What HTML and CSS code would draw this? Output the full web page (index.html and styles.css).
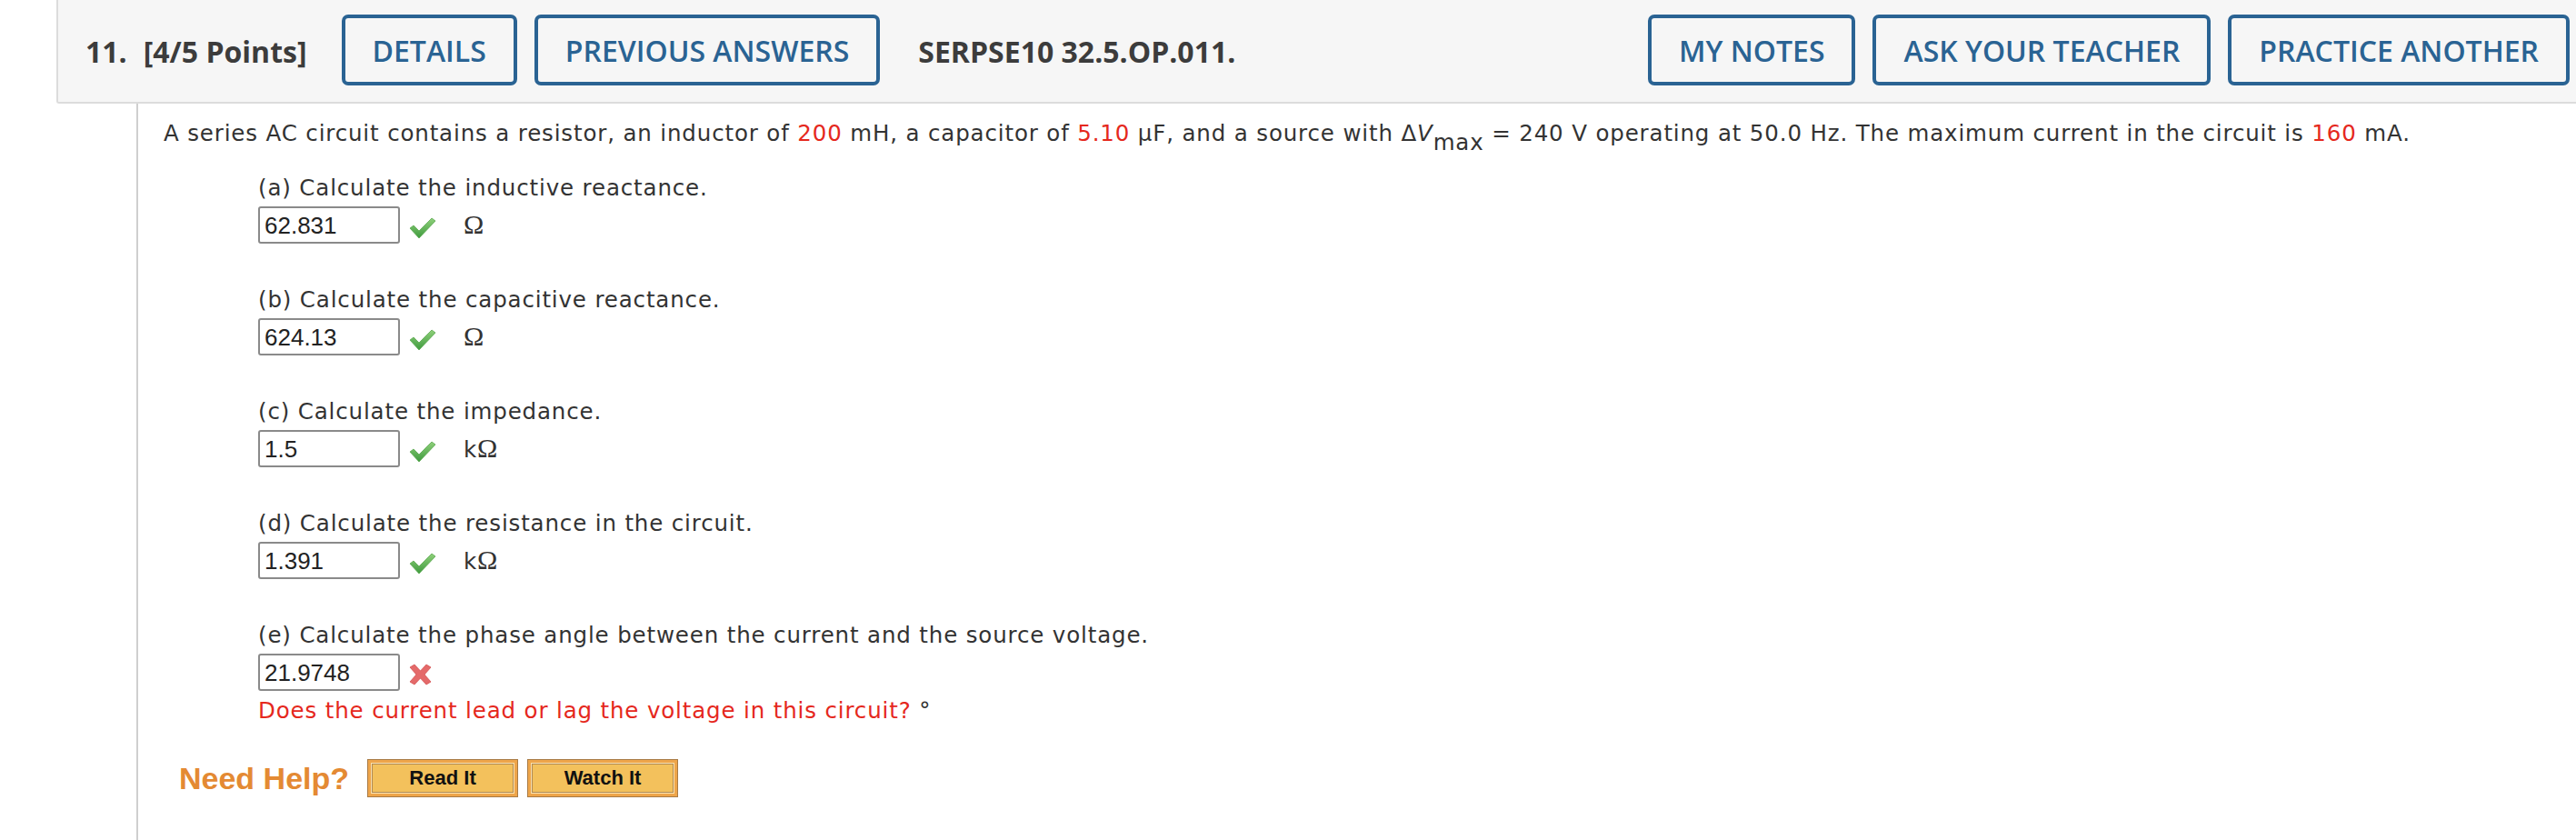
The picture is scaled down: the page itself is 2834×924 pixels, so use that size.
FILE: index.html
```html
<!DOCTYPE html>
<html>
<head>
<meta charset="utf-8">
<link rel="stylesheet" href="styles.css">
</head>
<body>
<div class="page">
  <div class="qhead">
    <span class="qnum">11.</span>
    <span class="qpts">[4/5 Points]</span>
    <button class="hbtn btn-details">DETAILS</button>
    <button class="hbtn">PREVIOUS ANSWERS</button>
    <span class="qcode">SERPSE10 32.5.OP.011.</span>
    <div class="hright">
      <button class="hbtn">MY NOTES</button>
      <button class="hbtn">ASK YOUR TEACHER</button>
      <button class="hbtn">PRACTICE ANOTHER</button>
    </div>
  </div>
  <div class="qbody">
    <p class="stem">A series AC circuit contains a resistor, an inductor of <span class="red">200</span> mH, a capacitor of <span class="red">5.10</span> μF, and a source with Δ<i>V</i><span class="sub">max</span> = 240 V operating at 50.0 Hz. The maximum current in the circuit is <span class="red">160</span> mA.</p>

    <div class="part">
      <div class="plabel">(a) Calculate the inductive reactance.</div>
      <div class="prow">
        <span class="ans">62.831</span>
        <svg class="ok" viewBox="0 0 30 25" width="30" height="25"><defs><linearGradient id="g1" x1="0" y1="0" x2="0" y2="1"><stop offset="0" stop-color="#8fd07a"/><stop offset="1" stop-color="#3e9a3e"/></linearGradient></defs><path d="M1 13 L5 10 L11 16 L25 2 L29 5 L11 24 Z" fill="url(#g1)" stroke="#5aa84f" stroke-width="0.8"/></svg>
        <span class="unit"><span class="ohm">Ω</span></span>
      </div>
    </div>

    <div class="part">
      <div class="plabel">(b) Calculate the capacitive reactance.</div>
      <div class="prow">
        <span class="ans">624.13</span>
        <svg class="ok" viewBox="0 0 30 25" width="30" height="25"><path d="M1 13 L5 10 L11 16 L25 2 L29 5 L11 24 Z" fill="url(#g1)" stroke="#5aa84f" stroke-width="0.8"/></svg>
        <span class="unit"><span class="ohm">Ω</span></span>
      </div>
    </div>

    <div class="part">
      <div class="plabel">(c) Calculate the impedance.</div>
      <div class="prow">
        <span class="ans">1.5</span>
        <svg class="ok" viewBox="0 0 30 25" width="30" height="25"><path d="M1 13 L5 10 L11 16 L25 2 L29 5 L11 24 Z" fill="url(#g1)" stroke="#5aa84f" stroke-width="0.8"/></svg>
        <span class="unit">k<span class="ohm">Ω</span></span>
      </div>
    </div>

    <div class="part">
      <div class="plabel">(d) Calculate the resistance in the circuit.</div>
      <div class="prow">
        <span class="ans">1.391</span>
        <svg class="ok" viewBox="0 0 30 25" width="30" height="25"><path d="M1 13 L5 10 L11 16 L25 2 L29 5 L11 24 Z" fill="url(#g1)" stroke="#5aa84f" stroke-width="0.8"/></svg>
        <span class="unit">k<span class="ohm">Ω</span></span>
      </div>
    </div>

    <div class="part part-last">
      <div class="plabel">(e) Calculate the phase angle between the current and the source voltage.</div>
      <div class="prow">
        <span class="ans">21.9748</span>
        <svg class="bad" viewBox="0 0 27 24" width="27" height="24"><path d="M2 4 L7 1 L13.5 8 L20 1 L25 4 L18 12 L25 20 L20 23 L13.5 16 L7 23 L2 20 L9 12 Z" fill="#e46a6a" stroke="#d55050" stroke-width="0.8"/></svg>
      </div>
      <div class="feedback">Does the current lead or lag the voltage in this circuit? <span class="deg">°</span></div>
    </div>

    <div class="help">
      <span class="help-label">Need Help?</span>
      <button class="hlp">Read It</button>
      <button class="hlp">Watch It</button>
    </div>
  </div>
</div>
</body>
</html>
```

FILE: styles.css
```css
html, body {
  margin: 0;
  padding: 0;
  background: #ffffff;
  overflow: hidden;
}
.page {
  width: 2834px;
  height: 924px;
  display: flex;
  flex-direction: column;
}
.qhead {
  flex-shrink: 0;
  margin-left: 62px;
  height: 112px;
  background: #f6f6f6;
  border-left: 2px solid #dcdcdc;
  border-bottom: 2px solid #dcdcdc;
  border-bottom-left-radius: 3px;
  display: flex;
  align-items: center;
  padding: 0 7px 0 30px;
  font-family: "Open Sans", sans-serif;
  color: #3c3c3c;
}
.qnum, .qpts, .qcode {
  font-weight: 700;
  font-size: 32px;
  white-space: nowrap;
}
.qpts {
  margin-left: 18px;
  margin-right: 38px;
}
.qcode {
  margin-left: 42px;
}
.hbtn {
  box-sizing: border-box;
  font-family: "Open Sans", sans-serif;
  font-weight: 600;
  font-size: 32px;
  color: #2a6393;
  background: #f6f6f6;
  border: 4px solid #2a6393;
  border-radius: 7px;
  height: 78px;
  padding: 0 30px;
  margin-top: -2px;
  white-space: nowrap;
}
.btn-details { margin-right: 19px; }
.hright {
  margin-left: auto;
  display: flex;
  gap: 19px;
}
.qbody {
  flex: 1;
  margin-left: 150px;
  border-left: 2px solid #cfcfcf;
  padding-left: 28px;
  font-family: "DejaVu Sans", Verdana, sans-serif;
  font-size: 24.5px;
  letter-spacing: 0.85px;
  color: #333333;
}
.stem {
  margin: 17px 0 0 0;
  line-height: 32px;
  white-space: nowrap;
}
.red { color: #e5281d; }
.sub {
  position: relative;
  top: 10px;
}
.part {
  margin-left: 104px;
  margin-top: 28px;
  display: flex;
  flex-direction: column;
}
.part + .part { margin-top: 46px; }
.plabel {
  line-height: 32px;
  white-space: nowrap;
}
.prow {
  display: flex;
  align-items: center;
  margin-top: 4px;
  height: 41px;
}
.ans {
  box-sizing: border-box;
  width: 156px;
  height: 41px;
  border: 2px solid #8a8a8a;
  border-radius: 3px;
  font-family: "Liberation Sans", Arial, sans-serif;
  font-size: 26px;
  letter-spacing: 0;
  color: #222;
  padding: 5px 0 0 5px;
  line-height: 28px;
}
.ok {
  margin-left: 10px;
  margin-top: 6px;
}
.bad {
  margin-left: 9px;
  margin-top: 4px;
}
.unit {
  margin-left: 30px;
  line-height: 32px;
}
.ohm {
  font-family: "Liberation Serif", "Times New Roman", serif;
  font-size: 30px;
  letter-spacing: 0;
}
.feedback {
  color: #e5281d;
  line-height: 32px;
  margin-top: 6px;
  white-space: nowrap;
}
.deg { color: #333; }
.help {
  display: flex;
  align-items: center;
  margin-left: 17px;
  margin-top: 37px;
}
.help-label {
  font-family: "Liberation Sans", Arial, sans-serif;
  font-weight: 700;
  font-size: 34px;
  letter-spacing: 0;
  color: #e48a33;
  margin-right: 20px;
}
.hlp {
  width: 166px;
  height: 42px;
  margin-right: 10px;
  font-family: "Liberation Sans", Arial, sans-serif;
  font-weight: 700;
  font-size: 22px;
  color: #111;
  background: #f3c15c;
  border: 1px solid #a87a44;
  box-shadow: inset 0 0 0 3px #eea54a, inset 0 0 0 4px #fbe3b0, inset 0 0 0 5px #b08a55;
  padding: 0;
}
```
